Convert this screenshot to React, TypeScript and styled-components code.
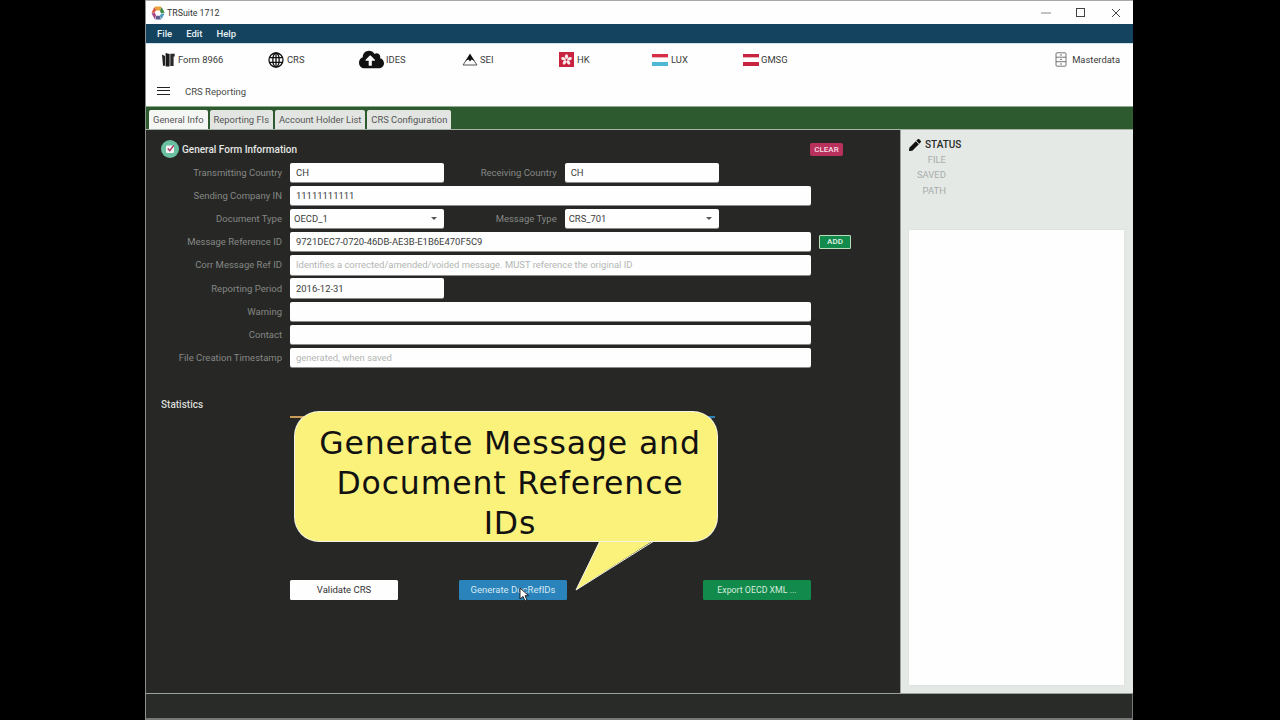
import React from "react";
import styled, { createGlobalStyle } from "styled-components";
import { FaCloudUploadAlt, FaPen } from "react-icons/fa";

const Global = createGlobalStyle`
  html, body { margin: 0; padding: 0; background: #000; height: 100%; overflow: hidden; }
  * { box-sizing: border-box; }
  body { font-family: Roboto, "Liberation Sans", sans-serif; }
`;

const Stage = styled.div`
  position: relative;
  width: 1280px;
  height: 720px;
  background: #000;
  padding-left: 145px;
`;
const Win = styled.div`
  width: 988px;
  height: 720px;
  display: flex;
  flex-direction: column;
  background: #fff;
  border-left: 1px solid #8d8f8d;
  border-top: 1px solid #a8aaa8;
`;
const TitleBar = styled.div`
  height: 23px;
  display: flex;
  align-items: center;
  padding-left: 5px;
  background: #fdfefd;
  font-size: 8.8px;
  color: #333;
  gap: 2px;
`;
const WinButtons = styled.div`
  margin-left: auto;
  display: flex;
  align-items: center;
  height: 100%;
`;
const WinButton = styled.div`
  width: 35px;
  height: 100%;
  display: flex;
  align-items: center;
  justify-content: center;
`;
const MenuBar = styled.div`
  height: 19px;
  background: #14435f;
  display: flex;
  align-items: center;
  gap: 14px;
  padding-left: 11px;
  color: #e8f0f4;
  font-size: 9.5px;
  font-weight: 500;
`;
const Toolbar = styled.div`
  height: 33px;
  display: flex;
  align-items: center;
  padding: 0 13px 1px 14px;
  background: #fdfefd;
  border-top: 1px solid #cfe2ea;
`;
const ToolItem = styled.div<{ $w: number }>`
  width: ${(p) => p.$w}px;
  display: flex;
  align-items: center;
  gap: 2px;
  font-size: 9.4px;
  color: #3a3a3a;
`;
const ToolIcon = styled.span<{ $w: number }>`
  width: ${(p) => p.$w}px;
  height: 18px;
  display: flex;
  align-items: center;
  justify-content: center;
  flex: none;
`;
const ToolEnd = styled.div`
  margin-left: auto;
  display: flex;
  align-items: center;
  gap: 5px;
  font-size: 9.4px;
  color: #3a3a3a;
`;
const SubBar = styled.div`
  height: 30px;
  display: flex;
  align-items: center;
  gap: 15px;
  padding-left: 11px;
  background: #fdfefd;
  font-size: 9.5px;
  color: #4a4a4a;
`;
const Burger = styled.span`
  width: 13px;
  height: 8px;
  border-top: 1.5px solid #222;
  border-bottom: 1.5px solid #222;
  position: relative;
  &::after {
    content: "";
    position: absolute;
    left: 0;
    right: 0;
    top: 1.75px;
    height: 1.5px;
    background: #222;
  }
`;
const TabBar = styled.div`
  height: 24px;
  background: #2d5a2e;
  border-top: 1px solid #8eab90;
  border-bottom: 1px solid #a9b3a9;
  display: flex;
  align-items: flex-end;
  gap: 2px;
  padding-left: 3px;
`;
const Tab = styled.div<{ $active?: boolean }>`
  height: 19px;
  padding: 0 4px;
  display: flex;
  align-items: center;
  border-radius: 2px 2px 0 0;
  font-size: 9.4px;
  color: #555;
  background: ${(p) => (p.$active ? "#f5f7f5" : "#e2e5e2")};
`;
const Body = styled.div`
  flex: 1;
  display: flex;
  min-height: 0;
`;
const Main = styled.div`
  flex: 1;
  min-width: 0;
  background: #272826;
  display: flex;
  flex-direction: column;
`;
const SectionHead = styled.div`
  height: 32px;
  display: flex;
  align-items: center;
  padding: 6px 0 0 15px;
  gap: 3px;
  font-size: 10px;
  font-weight: 500;
  color: #e4e6e4;
`;
const Clear = styled.button`
  margin-left: auto;
  margin-right: 57px;
  width: 33px;
  height: 13px;
  padding: 0;
  border: 0;
  border-radius: 2px;
  background: #b8305c;
  color: #f4dfe6;
  font: 500 8px Roboto, sans-serif;
`;
const Form = styled.div`
  display: grid;
  grid-template-columns: 136px 154px 104.7px 154px 84.3px 32px;
  column-gap: 8px;
  grid-auto-rows: 19.4px;
  row-gap: 3.8px;
  align-items: center;
  margin-top: 0.5px;
`;
const Label = styled.label`
  font-size: 9.5px;
  color: #858784;
  text-align: right;
  white-space: nowrap;
`;
const Field = styled.div<{ $wide?: boolean; $ph?: boolean; $pl?: number }>`
  height: 100%;
  grid-column: ${(p) => (p.$wide ? "2 / span 4" : "auto")};
  background: #fdfefd;
  border-radius: 2px;
  box-shadow: 0 1px 0 #8a8c8a;
  display: flex;
  align-items: center;
  padding: 0 5px 0 ${(p) => p.$pl ?? 6}px;
  font-size: 9.45px;
  color: ${(p) => (p.$ph ? "#b4b6b4" : "#3c3c3c")};
  white-space: nowrap;
  overflow: hidden;
`;
const Caret = styled.span`
  margin-left: auto;
  margin-right: 2px;
  border-left: 3px solid transparent;
  border-right: 3px solid transparent;
  border-top: 3px solid #555;
`;
const Add = styled.button`
  width: 32px;
  height: 14px;
  padding: 0;
  border: 1px solid #b9dcb9;
  border-radius: 1px;
  background: #128a4c;
  color: #e2f3e8;
  font: 500 8px Roboto, sans-serif;
`;
const Stats = styled.div`
  margin: 31.5px 0 0 15px;
  font-size: 10px;
  font-weight: 500;
  color: #d8dad8;
  height: 12px;
  line-height: 12px;
`;
const Chart = styled.div`
  margin: 5px 0 0 144px;
  width: 425px;
  height: 2px;
  display: flex;
`;
const ChartPart = styled.div<{ $c: string }>`
  flex: 1;
  background: ${(p) => p.$c};
`;
const Actions = styled.div`
  margin: 162px 0 0 144px;
  width: 521px;
  display: flex;
  align-items: center;
`;
const ActionBtn = styled.button<{ $bg: string; $fg: string; $ml?: string; $fs?: number }>`
  width: 108px;
  height: 20px;
  padding: 0;
  border: 0;
  border-radius: 1.5px;
  background: ${(p) => p.$bg};
  color: ${(p) => p.$fg};
  font: 400 ${(p) => p.$fs ?? 9.5}px Roboto, sans-serif;
  margin-left: ${(p) => p.$ml ?? "0"};
`;
const Side = styled.aside`
  width: 233px;
  background: #e4e9e6;
  border-left: 1px solid #9ba19c;
  padding: 7px 9px 8px 8px;
  display: flex;
  flex-direction: column;
`;
const StatusHead = styled.div`
  display: flex;
  align-items: center;
  gap: 4px;
  font-size: 10px;
  font-weight: 500;
  color: #2a2a2a;
  height: 15px;
`;
const StatusRow = styled.div`
  width: 37px;
  height: 15.4px;
  line-height: 15.4px;
  text-align: right;
  font-size: 9.5px;
  color: #a9adaa;
`;
const Log = styled.div`
  flex: 1;
  margin-top: 32px;
  background: #fdfefd;
  box-shadow: 0 0 1px #c8ccc8;
`;
const Footer = styled.div`
  height: 27px;
  background: #292b28;
  border-top: 1px solid #9ba19c;
  border-bottom: 2px solid #777;
  border-right: 1px solid #777;
`;
const Bubble = styled.div`
  position: absolute;
  left: 295px;
  top: 412px;
  width: 422px;
  height: 129px;
  padding: 11px 12px 0 20px;
  background: #fbf27c;
  border-radius: 24px;
  box-shadow: 0 0 0 1px #f4f4e6;
  font-family: "DejaVu Sans", Verdana, sans-serif;
  font-size: 31.5px;
  line-height: 40px;
  letter-spacing: 0.85px;
  color: #111;
  text-align: center;
`;
const BubbleTail = styled.svg`
  position: absolute;
  left: 574px;
  top: 540px;
`;
const Cursor = styled.svg`
  position: absolute;
  left: 519px;
  top: 587px;
`;

const Logo = () => (
  <svg width="14" height="14" viewBox="0 0 14 14">
    <path d="M4 .6h6L9.6 4.4H4.6Z" fill="#e9a23b" />
    <path d="M10.6 .9 13.6 6.4 10 7.4 9 4.8Z" fill="#3d8a4a" />
    <path d="M13.6 7.2 10.8 13 8.6 10l1.4-2Z" fill="#4f9bc4" />
    <path d="M10 13.4H4.4l.8-3.6h3.4Z" fill="#5a5f8f" />
    <path d="M3.8 13.2.6 7.6 4 6.8l1 2.6Z" fill="#a8478a" />
    <path d="M.6 7 3.4.9 5 4 3.8 6.4Z" fill="#d9533f" />
  </svg>
);
const FormIcon = () => (
  <svg width="13" height="15" viewBox="0 0 13 15">
    <path d="M0 2.6 3 4v9.4L1 14Z" fill="#222" />
    <path d="M3.6 1 7.6 2v12.4H3.6Z" fill="#1a1a1a" />
    <path d="M8.3 1.8h4.4v2.6h-1.1V14H8.3Z" fill="#2a2a2a" />
  </svg>
);
const Globe = () => (
  <svg width="16" height="16" viewBox="0 0 16 16" fill="none" stroke="#111" strokeWidth="1.3">
    <circle cx="8" cy="8" r="7" />
    <ellipse cx="8" cy="8" rx="3.2" ry="7" />
    <path d="M8 1v14M1.3 5.6h13.4M1.3 10.4h13.4" />
  </svg>
);
const Mountain = () => (
  <svg width="16" height="13" viewBox="0 0 16 13">
    <path d="M1 12 8 1.5 15 12Z" fill="none" stroke="#555" strokeWidth="1" />
    <path d="M8 .8 12.4 8 9.6 6.6 8 8.4 6.4 6.6 3.6 8Z" fill="#111" />
  </svg>
);
const HK = () => (
  <svg width="15" height="15" viewBox="0 0 15 15">
    <rect width="15" height="15" fill="#c9243f" />
    <g fill="#fbeaec">
      <ellipse cx="7.5" cy="4.6" rx="1.6" ry="2.4" />
      <ellipse cx="7.5" cy="4.6" rx="1.6" ry="2.4" transform="rotate(72 7.5 7.8)" />
      <ellipse cx="7.5" cy="4.6" rx="1.6" ry="2.4" transform="rotate(144 7.5 7.8)" />
      <ellipse cx="7.5" cy="4.6" rx="1.6" ry="2.4" transform="rotate(216 7.5 7.8)" />
      <ellipse cx="7.5" cy="4.6" rx="1.6" ry="2.4" transform="rotate(288 7.5 7.8)" />
    </g>
  </svg>
);
const Stripes = ({ a, b }: { a: string; b: string }) => (
  <svg width="16" height="12" viewBox="0 0 16 12">
    <rect width="16" height="3.6" fill={a} />
    <rect y="3.6" width="16" height="4.4" fill="#fff" />
    <rect y="8" width="16" height="4" fill={b} />
  </svg>
);
const Cabinet = () => (
  <svg width="12" height="15" viewBox="0 0 12 15" fill="none" stroke="#666" strokeWidth="0.9">
    <rect x="1" y="0.8" width="10" height="13.4" rx="1" />
    <path d="M1 5.2h10M1 9.7h10M5 3h2M5 7.4h2M5 12h2" />
  </svg>
);
const InfoIcon = () => (
  <svg width="18" height="18" viewBox="0 0 18 18">
    <circle cx="9" cy="9" r="9" fill="#6cc0a2" />
    <rect x="5" y="5.5" width="8" height="7.5" rx="1" fill="#f4f2f2" />
    <path d="M6.8 8.4 8.8 10.6 12.8 5.4" fill="none" stroke="#a83a6a" strokeWidth="1.5" />
  </svg>
);

const tools = [
  { w: 107, iw: 16, icon: <FormIcon />, t: "Form 8966" },
  { w: 91, iw: 18, icon: <Globe />, t: "CRS" },
  { w: 103, iw: 26, icon: <FaCloudUploadAlt size={25} color="#111" />, t: "IDES" },
  { w: 97, iw: 17, icon: <Mountain />, t: "SEI" },
  { w: 93, iw: 17, icon: <HK />, t: "HK" },
  { w: 91, iw: 18, icon: <Stripes a="#d62f45" b="#4fb8d4" />, t: "LUX" },
  { w: 90, iw: 17, icon: <Stripes a="#c9243f" b="#c9243f" />, t: "GMSG" },
];

export default function App() {
  return (
    <Stage>
      <Global />
      <Win>
        <TitleBar>
          <Logo />
          TRSuite 1712
          <WinButtons>
            <WinButton>
              <svg width="10" height="10"><path d="M0 5h10" stroke="#888" strokeWidth="1" /></svg>
            </WinButton>
            <WinButton>
              <svg width="10" height="10"><rect x=".5" y=".5" width="8" height="8" fill="none" stroke="#444" /></svg>
            </WinButton>
            <WinButton>
              <svg width="10" height="10"><path d="M1 1l8 8M9 1l-8 8" stroke="#444" /></svg>
            </WinButton>
          </WinButtons>
        </TitleBar>
        <MenuBar>
          <span>File</span>
          <span>Edit</span>
          <span>Help</span>
        </MenuBar>
        <Toolbar>
          {tools.map((x) => (
            <ToolItem key={x.t} $w={x.w}>
              <ToolIcon $w={x.iw}>{x.icon}</ToolIcon>
              {x.t}
            </ToolItem>
          ))}
          <ToolEnd>
            <Cabinet />
            Masterdata
          </ToolEnd>
        </Toolbar>
        <SubBar>
          <Burger />
          CRS Reporting
        </SubBar>
        <TabBar>
          <Tab $active>General Info</Tab>
          <Tab>Reporting FIs</Tab>
          <Tab>Account Holder List</Tab>
          <Tab>CRS Configuration</Tab>
        </TabBar>
        <Body>
          <Main>
            <SectionHead>
              <InfoIcon />
              General Form Information
              <Clear>CLEAR</Clear>
            </SectionHead>
            <Form>
              <Label>Transmitting Country</Label>
              <Field>CH</Field>
              <Label>Receiving Country</Label>
              <Field>CH</Field>
              <span />
              <span />

              <Label>Sending Company IN</Label>
              <Field $wide>11111111111</Field>
              <span />

              <Label>Document Type</Label>
              <Field $pl={4}>OECD_1<Caret /></Field>
              <Label>Message Type</Label>
              <Field $pl={4}>CRS_701<Caret /></Field>
              <span />
              <span />

              <Label>Message Reference ID</Label>
              <Field $wide>9721DEC7-0720-46DB-AE3B-E1B6E470F5C9</Field>
              <Add>ADD</Add>

              <Label>Corr Message Ref ID</Label>
              <Field $wide $ph>Identifies a corrected/amended/voided message. MUST reference the original ID</Field>
              <span />

              <Label>Reporting Period</Label>
              <Field>2016-12-31</Field>
              <span />
              <span />
              <span />
              <span />

              <Label>Warning</Label>
              <Field $wide />
              <span />

              <Label>Contact</Label>
              <Field $wide />
              <span />

              <Label>File Creation Timestamp</Label>
              <Field $wide $ph>generated, when saved</Field>
            </Form>
            <Stats>Statistics</Stats>
            <Chart>
              <ChartPart $c="#c99a56" />
              <ChartPart $c="#2e7fb5" />
            </Chart>
            <Actions>
              <ActionBtn $bg="#fdfefd" $fg="#333">Validate CRS</ActionBtn>
              <ActionBtn $bg="#2a84bb" $fg="#d6e8f2" $ml="61px">Generate DocRefIDs</ActionBtn>
              <ActionBtn $bg="#128a4c" $fg="#d2ecdc" $ml="136px" $fs={8.8}>Export OECD XML ...</ActionBtn>
            </Actions>
          </Main>
          <Side>
            <StatusHead>
              <FaPen size={12} color="#111" />
              STATUS
            </StatusHead>
            <StatusRow>FILE</StatusRow>
            <StatusRow>SAVED</StatusRow>
            <StatusRow>PATH</StatusRow>
            <Log />
          </Side>
        </Body>
        <Footer />
      </Win>
      <BubbleTail width="84" height="54" viewBox="0 0 84 54">
        <path d="M26 0 2 50 80 0Z" fill="#fbf27c" />
        <path d="M26 1 2 50 80 1" fill="none" stroke="#f4f4e6" strokeWidth="1" />
      </BubbleTail>
      <Bubble>Generate Message and Document Reference IDs</Bubble>
      <Cursor width="10" height="15" viewBox="0 0 10 15">
        <path d="M1 1v11l3-2.5 2 4.5 2-1-2-4.3h3.6Z" fill="#fff" stroke="#111" strokeWidth="0.9" />
      </Cursor>
    </Stage>
  );
}
